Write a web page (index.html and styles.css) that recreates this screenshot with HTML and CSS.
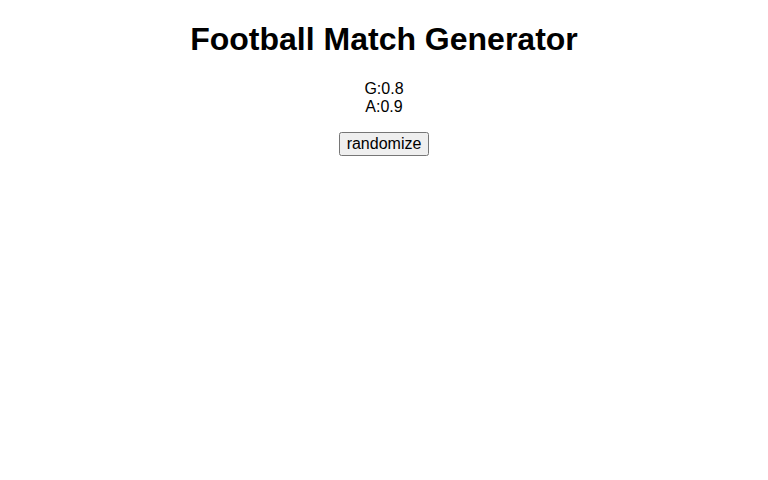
FILE: index.html
```html
<!DOCTYPE html>
<html>
<head>
<meta charset="utf-8">
<title>Football Match Generator</title>
<link rel="stylesheet" href="styles.css">
</head>
<body>
<div class="app">
  <h1 class="title">Football Match Generator</h1>
  <div class="stats">
    <div class="stat">G:0.8</div>
    <div class="stat">A:0.9</div>
  </div>
  <p class="actions"><button class="randomize" type="button">randomize</button></p>
</div>
</body>
</html>
```
FILE: styles.css
```css
body {
  margin: 8px;
  font-family: "Liberation Sans", Arial, sans-serif;
  font-size: 16px;
  color: #000;
  background: #fff;
}

.app {
  text-align: center;
}

.title {
  font-size: 32px;
  font-weight: bold;
  margin: 13.44px 0 21.44px;
}

.stat {
  line-height: normal;
}

.actions {
  margin: 16px 0;
}

.randomize {
  font-family: "Liberation Sans", Arial, sans-serif;
  font-size: 16px;
}
```
